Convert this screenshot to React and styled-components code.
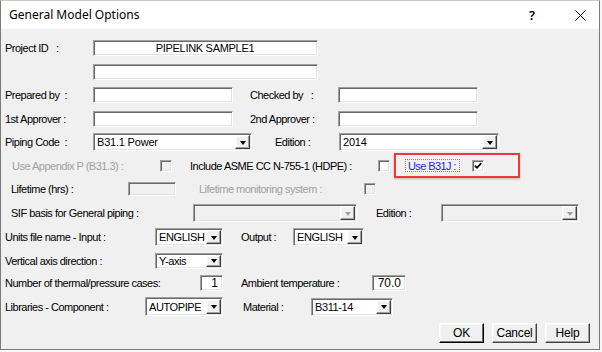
import React from 'react'
import styled, { createGlobalStyle, css } from 'styled-components'

const GlobalStyle = createGlobalStyle`
    html, body {
        margin: 0;
        padding: 0;
        background: #f7f7f7;
    }
    * {
        box-sizing: border-box;
    }
`

const sunken = css`
    border: 1px solid;
    border-color: #a0a0a0 #ffffff #ffffff #a0a0a0;
    box-shadow: inset 1px 1px 0 #696969, inset -1px -1px 0 #e3e3e3;
`

const raised = css`
    border: 1px solid;
    border-color: #ffffff #404040 #404040 #ffffff;
    box-shadow: inset -1px -1px 0 #a0a0a0, inset 1px 1px 0 #f8f8f8;
`

const Window = styled.div`
    width: 600px;
    height: 350px;
    background: #f0f0f0;
    border: 1px solid #7a7a7a;
    border-top: 1px solid #c8c8c8;
    display: flex;
    flex-direction: column;
    font-family: 'Liberation Sans', Arial, sans-serif;
    font-size: 11px;
    letter-spacing: -0.5px;
    color: #000;
`

const TitleBar = styled.div`
    height: 28px;
    background: #fff;
    display: flex;
    align-items: center;
    padding-left: 8px;
    font-family: 'Noto Sans', 'Open Sans', sans-serif;
    font-size: 12px;
    letter-spacing: 0;
    .title {
        flex: 1;
        margin-top: -1px;
    }
    .help {
        width: 16px;
        font-size: 13px;
        font-weight: 600;
        margin-right: 30px;
    }
    .close {
        width: 12px;
        margin-right: 12px;
        display: flex;
    }
`

const Row = styled.div`
    display: flex;
    align-items: center;
    height: ${(p) => p.$h || 16}px;
    margin-top: ${(p) => p.$mt || 0}px;
    flex-shrink: 0;
`

const Label = styled.div`
    width: ${(p) => p.$w}px;
    padding-left: ${(p) => p.$pl || 0}px;
    flex-shrink: 0;
    white-space: pre;
    color: ${(p) => (p.$disabled ? '#a0a0a0' : '#000')};
`

const TextBox = styled.div`
    ${sunken};
    width: ${(p) => p.$w}px;
    height: ${(p) => p.$h || 16}px;
    flex-shrink: 0;
    background: ${(p) => (p.$disabled ? '#f0f0f0' : '#fff')};
    display: flex;
    align-items: center;
    justify-content: ${(p) => p.$align || 'flex-start'};
    padding: 0 4px 0 3px;
    font-size: ${(p) => p.$fs || 11}px;
    letter-spacing: ${(p) => (p.$fs ? '0' : '-0.3px')};
    white-space: nowrap;
`

const ComboBox = styled.div`
    ${sunken};
    width: ${(p) => p.$w}px;
    height: ${(p) => p.$h || 18}px;
    flex-shrink: 0;
    background: ${(p) => (p.$disabled ? '#f0f0f0' : '#fff')};
    display: flex;
    padding: 1px;
    .value {
        flex: 1;
        display: flex;
        align-items: center;
        padding-left: 2px;
        letter-spacing: ${(p) => (p.$wide ? '-0.2px' : '-0.4px')};
        overflow: hidden;
        white-space: nowrap;
    }
`

const DropButton = styled.div`
    ${raised};
    width: 15px;
    flex-shrink: 0;
    background: #f0f0f0;
    display: flex;
    align-items: center;
    justify-content: center;
    &::after {
        content: '';
        border-left: 3.5px solid transparent;
        border-right: 3.5px solid transparent;
        border-top: 4px solid ${(p) => (p.$disabled ? '#a0a0a0' : '#000')};
        margin-top: 1px;
    }
`

const CheckBox = styled.div`
    ${sunken};
    width: 12px;
    height: 12px;
    flex-shrink: 0;
    margin-left: ${(p) => p.$ml || 0}px;
    background: ${(p) => (p.$disabled ? '#f0f0f0' : '#fff')};
    display: flex;
    align-items: center;
    justify-content: center;
`

const Highlight = styled.div`
    display: flex;
    align-items: center;
    width: 126px;
    height: 25px;
    margin-left: 4px;
    border: 2px solid #ec3a3c;
    box-shadow: 0 1px 2px rgba(0, 0, 0, 0.25);
    padding-left: 9px;
`

const FocusLabel = styled.div`
    width: 55px;
    height: 13px;
    border: 1px dotted #8f8f3a;
    color: #1e1ef5;
    display: flex;
    align-items: center;
    padding-left: 2px;
    white-space: nowrap;
    letter-spacing: -0.6px;
`

const ButtonRow = styled.div`
    display: flex;
    justify-content: flex-end;
    gap: 8px;
    margin-top: 7px;
    padding-right: 9px;
`

const Button = styled.div`
    ${raised};
    width: 45px;
    height: 20px;
    display: flex;
    align-items: center;
    justify-content: center;
    font-size: 12px;
    letter-spacing: -0.2px;
    ${(p) =>
        p.$default &&
        css`
            border-color: #ffffff #000 #000 #ffffff;
            box-shadow: inset -1px -1px 0 #696969, inset 1px 1px 0 #f8f8f8;
        `}
`

const Combo = ({ value, disabled, ...rest }) => (
    <ComboBox $disabled={disabled} {...rest}>
        <span className="value">{value}</span>
        <DropButton $disabled={disabled} />
    </ComboBox>
)

const Check = ({ checked, disabled, ml }) => (
    <CheckBox $disabled={disabled} $ml={ml}>
        {checked && (
            <svg width="8" height="8" viewBox="0 0 8 8">
                <path d="M0.8 3.6 L3 5.8 L7.3 1.2" fill="none" stroke="#000" strokeWidth="1.7" />
            </svg>
        )}
    </CheckBox>
)

const App = () => {
    return (
        <>
            <GlobalStyle />
            <Window>
                <TitleBar>
                    <span className="title">General Model Options</span>
                    <span className="help">?</span>
                    <span className="close">
                        <svg width="11" height="11" viewBox="0 0 11 11">
                            <path d="M0.5 0.5 L10.5 10.5 M10.5 0.5 L0.5 10.5" stroke="#000" strokeWidth="1" />
                        </svg>
                    </span>
                </TitleBar>

                <Row $mt={11}>
                    <Label $w={92} $pl={4}>{'Project ID   :'}</Label>
                    <TextBox $w={225} $align="center">PIPELINK SAMPLE1</TextBox>
                </Row>
                <Row $mt={8}>
                    <Label $w={92} />
                    <TextBox $w={225} />
                </Row>
                <Row $mt={7}>
                    <Label $w={92} $pl={4}>{'Prepared by  :'}</Label>
                    <TextBox $w={140} />
                    <Label $w={105} $pl={17}>{'Checked by   :'}</Label>
                    <TextBox $w={140} />
                </Row>
                <Row $mt={8}>
                    <Label $w={92} $pl={4}>1st Approver :</Label>
                    <TextBox $w={140} />
                    <Label $w={105} $pl={17}>2nd Approver :</Label>
                    <TextBox $w={140} />
                </Row>
                <Row $mt={6} $h={18}>
                    <Label $w={92} $pl={4}>{'Piping Code  :'}</Label>
                    <Combo $w={159} value="B31.1 Power" $wide />
                    <Label $w={87} $pl={23}>Edition :</Label>
                    <Combo $w={160} value="2014" $wide />
                </Row>
                <Row $mt={2} $h={25}>
                    <Label $w={159} $pl={11} $disabled>Use Appendix P (B31.3) :</Label>
                    <Check disabled />
                    <Label $w={206} $pl={18}>Include ASME CC N-755-1 (HDPE) :</Label>
                    <Check />
                    <Highlight>
                        <FocusLabel>Use B31J :</FocusLabel>
                        <Check checked ml={12} />
                    </Highlight>
                </Row>
                <Row $mt={4} $h={13}>
                    <Label $w={127} $pl={10}>Lifetime (hrs) :</Label>
                    <TextBox $w={48} $h={14} $disabled />
                    <Label $w={188} $pl={23} $disabled>Lifetime monitoring system :</Label>
                    <Check disabled />
                </Row>
                <Row $mt={9} $h={18}>
                    <Label $w={192} $pl={10}>SIF basis for General piping :</Label>
                    <Combo $w={164} disabled />
                    <Label $w={84} $pl={19}>Edition :</Label>
                    <Combo $w={138} disabled />
                </Row>
                <Row $mt={6} $h={18}>
                    <Label $w={154} $pl={4}>Units file name - Input :</Label>
                    <Combo $w={68} value="ENGLISH" />
                    <Label $w={70} $pl={18}>Output :</Label>
                    <Combo $w={71} value="ENGLISH" />
                </Row>
                <Row $mt={6} $h={17}>
                    <Label $w={154} $pl={4}>Vertical axis direction :</Label>
                    <Combo $w={68} $h={16} value="Y-axis" />
                </Row>
                <Row $mt={6} $h={16}>
                    <Label $w={199} $pl={4}>Number of thermal/pressure cases:</Label>
                    <TextBox $w={23} $align="flex-end" $fs={12}>1</TextBox>
                    <Label $w={149} $pl={18}>Ambient temperature :</Label>
                    <TextBox $w={34} $align="flex-end" $fs={12}>70.0</TextBox>
                </Row>
                <Row $mt={6} $h={19}>
                    <Label $w={144} $pl={4}>Libraries - Component :</Label>
                    <Combo $w={78} $h={19} value="AUTOPIPE" />
                    <Label $w={88} $pl={20}>Material :</Label>
                    <Combo $w={82} value="B311-14" />
                </Row>
                <ButtonRow>
                    <Button $default>OK</Button>
                    <Button>Cancel</Button>
                    <Button>Help</Button>
                </ButtonRow>
            </Window>
        </>
    )
}

export default App
